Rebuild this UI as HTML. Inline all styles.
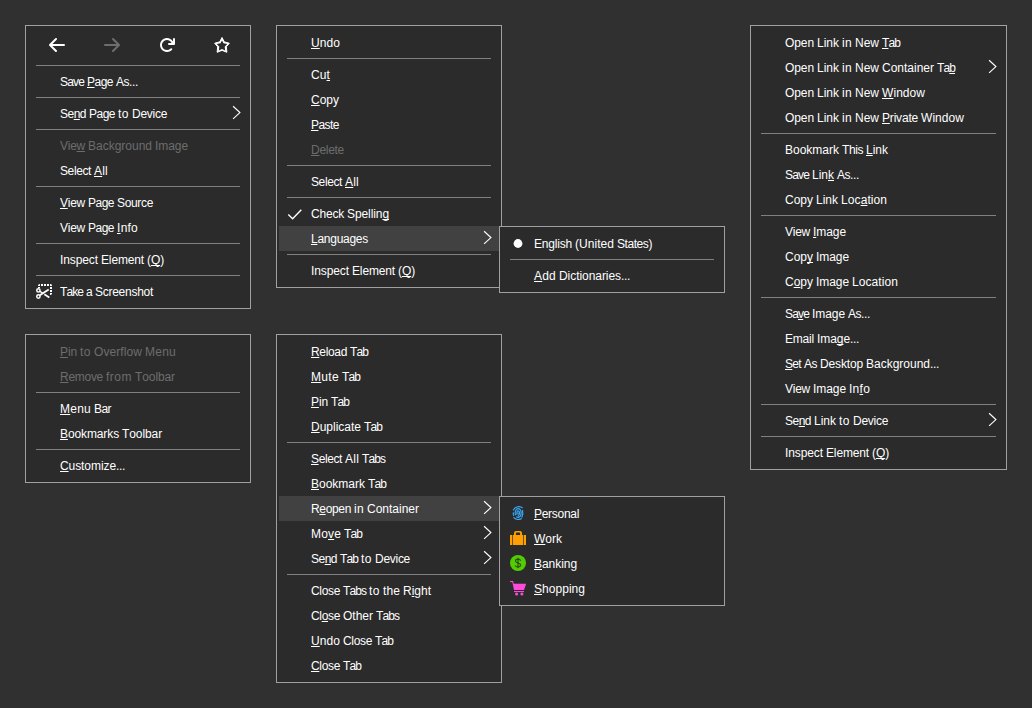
<!DOCTYPE html>
<html><head><meta charset="utf-8"><title>Context menus</title>
<style>
html,body{margin:0;padding:0}
body{width:1032px;height:708px;overflow:hidden;background:#303030;position:relative;font-family:"Liberation Sans",sans-serif;font-size:12px;color:#fff}
.menu{position:absolute;box-sizing:border-box;border:1px solid #a0a0a0;background:#2b2b2b;padding:4px 2px}
.it{font-kerning:none;position:relative;height:25px;line-height:25px;padding-left:32px;white-space:nowrap}
.it .t{position:relative;top:1px;display:inline-block}
.it.dis{color:#6d6d6d}
.it.hl{background:#414141}
.sep{height:1px;margin:3px 8px;background:#808080}
u{text-decoration:underline;text-decoration-skip-ink:none;text-underline-offset:1px;text-decoration-thickness:1px}
.dots{letter-spacing:-0.73px}
.row{height:32px;position:relative}
svg{position:absolute;display:block}
</style></head><body>
<div class="menu" style="left:25px;top:25px;width:226px">
<div class="row"><svg style="left:21px;top:7px" width="16" height="16" viewBox="0 0 16 16"><path fill="#fff" d="M15 7H3.414l4.293-4.293a1 1 0 0 0-1.414-1.414l-6 6a1 1 0 0 0 0 1.414l6 6a1 1 0 0 0 1.414-1.414L3.414 9H15a1 1 0 0 0 0-2z"/></svg><svg style="left:76px;top:7px" width="16" height="16" viewBox="0 0 16 16"><path fill="#6e6e6e" d="M15.707 7.293l-6-6a1 1 0 0 0-1.414 1.414L12.586 7H1a1 1 0 0 0 0 2h11.586l-4.293 4.293a1 1 0 1 0 1.414 1.414l6-6a1 1 0 0 0 0-1.414z"/></svg><svg style="left:131px;top:7px" width="16" height="16" viewBox="0 0 16 16"><path fill="#fff" d="M15 1a1 1 0 0 0-1 1v2.418A6.995 6.995 0 1 0 8 15a6.954 6.954 0 0 0 4.950-2.050 1 1 0 0 0-1.414-1.414A5.019 5.019 0 1 1 12.549 6H10a1 1 0 0 0 0 2h5a1 1 0 0 0 1-1V2a1 1 0 0 0-1-1z"/></svg><svg style="left:186px;top:7px" width="16" height="16" viewBox="0 0 16 16"><path fill="#fff" stroke="#fff" stroke-width="1" stroke-linejoin="round" d="M8 .5L10.250 4.850L15.350 6.250L12.350 9.800L12.850 15.300L8 13.350L3.150 15.300L3.650 9.800L.650 6.250L5.750 4.850z"/><path fill="#2b2b2b" d="M8.00 3.58L9.51 6.36L13.22 7.12L10.67 9.84L11.19 13.44L8.00 12.05L4.81 13.44L5.33 9.84L2.78 7.12L6.49 6.36z"/></svg></div>
<div class="sep"></div>
<div class="it"><span class="t"><span style="letter-spacing:-0.838px;margin-right:3px">Save</span><span style="letter-spacing:-0.506px;margin-right:3px"><u>P</u>age</span><span style="letter-spacing:-0.502px">As<span style="letter-spacing:-0.334px">...</span></span></span></div>
<div class="sep"></div>
<div class="it"><svg style="right:6px;top:4px" width="10" height="16" viewBox="0 0 10 16"><path fill="none" stroke="#fff" stroke-width="1.150" d="M1.100 1.250L7.900 7.550L1.100 13.850"/></svg><span class="t"><span style="letter-spacing:-0.506px;margin-right:3px">Se<u>n</u>d</span><span style="letter-spacing:-0.506px;margin-right:3px">Page</span><span style="letter-spacing:0.496px;margin-right:3px">to</span><span style="letter-spacing:-0.280px">Device</span></span></div>
<div class="sep"></div>
<div class="it dis"><span class="t"><span style="letter-spacing:-0.252px;margin-right:3px">Vie<u>w</u></span><span style="letter-spacing:-0.004px;margin-right:3px">Background</span><span style="letter-spacing:-0.070px">Image</span></span></div>
<div class="it"><span class="t"><span style="letter-spacing:-0.392px;margin-right:3px">Select</span><span style="letter-spacing:0.221px"><u>A</u>ll</span></span></div>
<div class="sep"></div>
<div class="it"><span class="t"><span style="letter-spacing:-0.252px;margin-right:3px"><u>V</u>iew</span><span style="letter-spacing:-0.506px;margin-right:3px">Page</span><span style="letter-spacing:-0.337px">Source</span></span></div>
<div class="it"><span class="t"><span style="letter-spacing:-0.252px;margin-right:3px">View</span><span style="letter-spacing:-0.506px;margin-right:3px">Page</span><span style="letter-spacing:0.246px"><u>I</u>nfo</span></span></div>
<div class="sep"></div>
<div class="it"><span class="t"><span style="letter-spacing:-0.098px;margin-right:3px">Inspect</span><span style="letter-spacing:-0.146px;margin-right:3px">Element</span><span style="letter-spacing:-0.109px">(<u>Q</u>)</span></span></div>
<div class="sep"></div>
<div class="it"><svg style="left:8px;top:4px" width="16" height="16" viewBox="0 0 16 16"><g fill="#fff"><path d="M1.900 3A2.100 2.100 0 0 1 4 .900V3z"/><rect x="5" y="1" width="2" height="2"/><rect x="8" y="1" width="2" height="2"/><rect x="11" y="1" width="2" height="2"/><path d="M14 .900A2.100 2.100 0 0 1 16.100 3H14z"/><rect x="14" y="4" width="2" height="2"/><rect x="14" y="7" width="2" height="2"/><path d="M16.100 10A2.100 2.100 0 0 1 14 12.100V10z"/><rect x="2" y="4" width="2" height="1"/></g><g fill="none" stroke="#fff"><circle cx="2.400" cy="7.400" r="1.650" stroke-width="1.500"/><circle cx="2.400" cy="13.500" r="1.650" stroke-width="1.500"/><path stroke-width="1.900" d="M3.800 12.200L12.700 6.500"/><path stroke-width="1.700" d="M8.300 11.300L13.300 14.500"/><path stroke-width="1.300" d="M3.900 8.400L7.200 10.500"/></g></svg><span class="t"><span style="letter-spacing:-0.919px;margin-right:3px">Take</span><span style="letter-spacing:-0.674px;margin-right:3px">a</span><span style="letter-spacing:-0.270px">Screenshot</span></span></div>
</div>
<div class="menu" style="left:276px;top:25px;width:226px">
<div class="it"><span class="t"><span style="letter-spacing:0.078px"><u>U</u>ndo</span></span></div>
<div class="sep"></div>
<div class="it"><span class="t"><span style="letter-spacing:0.109px">Cu<u>t</u></span></span></div>
<div class="it"><span class="t"><span style="letter-spacing:-0.003px"><u>C</u>opy</span></span></div>
<div class="it"><span class="t"><span style="letter-spacing:-0.537px"><u>P</u>aste</span></span></div>
<div class="it dis"><span class="t"><span style="letter-spacing:-0.281px"><u>D</u>elete</span></span></div>
<div class="sep"></div>
<div class="it"><span class="t"><span style="letter-spacing:-0.392px;margin-right:3px">Select</span><span style="letter-spacing:0.221px"><u>A</u>ll</span></span></div>
<div class="sep"></div>
<div class="it"><svg style="left:8px;top:6px" width="16" height="14" viewBox="0 0 16 14"><path fill="none" stroke="#fff" stroke-width="1.400" d="M1.300 7.600L5.600 11.650L14.300 2.700"/></svg><span class="t"><span style="letter-spacing:-0.203px;margin-right:3px">Check</span><span style="letter-spacing:-0.087px">Spellin<u>g</u></span></span></div>
<div class="it hl"><svg style="right:6px;top:4px" width="10" height="16" viewBox="0 0 10 16"><path fill="none" stroke="#fff" stroke-width="1.150" d="M1.100 1.250L7.900 7.550L1.100 13.850"/></svg><span class="t"><span style="letter-spacing:-0.266px"><u>L</u>anguages</span></span></div>
<div class="sep"></div>
<div class="it"><span class="t"><span style="letter-spacing:-0.098px;margin-right:3px">Inspect</span><span style="letter-spacing:-0.146px;margin-right:3px">Element</span><span style="letter-spacing:-0.109px">(<u>Q</u>)</span></span></div>
</div>
<div class="menu" style="left:499px;top:226px;width:226px">
<div class="it"><svg style="left:11px;top:8px" width="10" height="10" viewBox="0 0 10 10"><circle cx="5" cy="4.500" r="4.400" fill="#fff"/></svg><span class="t"><span style="letter-spacing:-0.194px;margin-right:3px">English</span><span style="letter-spacing:0.045px;margin-right:3px">(United</span><span style="letter-spacing:-0.431px">States)</span></span></div>
<div class="sep"></div>
<div class="it"><span class="t"><span style="letter-spacing:0.216px;margin-right:3px"><u>A</u>dd</span><span style="letter-spacing:-0.057px">Dictionaries<span style="letter-spacing:-0.334px">...</span></span></span></div>
</div>
<div class="menu" style="left:750px;top:25px;width:257px">
<div class="it"><span class="t"><span style="letter-spacing:-0.089px;margin-right:3px">Open</span><span style="letter-spacing:-0.003px;margin-right:3px">Link</span><span style="letter-spacing:0.330px;margin-right:3px">in</span><span style="letter-spacing:-0.002px;margin-right:3px">New</span><span style="letter-spacing:-0.893px"><u>T</u>ab</span></span></div>
<div class="it"><svg style="right:6px;top:4px" width="10" height="16" viewBox="0 0 10 16"><path fill="none" stroke="#fff" stroke-width="1.150" d="M1.100 1.250L7.900 7.550L1.100 13.850"/></svg><span class="t"><span style="letter-spacing:-0.089px;margin-right:3px">Open</span><span style="letter-spacing:-0.003px;margin-right:3px">Link</span><span style="letter-spacing:0.330px;margin-right:3px">in</span><span style="letter-spacing:-0.002px;margin-right:3px">New</span><span style="letter-spacing:-0.003px;margin-right:3px">Container</span><span style="letter-spacing:-0.893px">Ta<u>b</u></span></span></div>
<div class="it"><span class="t"><span style="letter-spacing:-0.089px;margin-right:3px">Open</span><span style="letter-spacing:-0.003px;margin-right:3px">Link</span><span style="letter-spacing:0.330px;margin-right:3px">in</span><span style="letter-spacing:-0.002px;margin-right:3px">New</span><span style="letter-spacing:0.053px"><u>W</u>indow</span></span></div>
<div class="it"><span class="t"><span style="letter-spacing:-0.089px;margin-right:3px">Open</span><span style="letter-spacing:-0.003px;margin-right:3px">Link</span><span style="letter-spacing:0.330px;margin-right:3px">in</span><span style="letter-spacing:-0.002px;margin-right:3px">New</span><span style="letter-spacing:-0.193px;margin-right:3px"><u>P</u>rivate</span><span style="letter-spacing:0.053px">Window</span></span></div>
<div class="sep"></div>
<div class="it"><span class="t"><span style="letter-spacing:-0.002px;margin-right:3px">Bookmark</span><span style="letter-spacing:-0.417px;margin-right:3px">This</span><span style="letter-spacing:-0.003px"><u>L</u>ink</span></span></div>
<div class="it"><span class="t"><span style="letter-spacing:-0.838px;margin-right:3px">Save</span><span style="letter-spacing:-0.003px;margin-right:3px">Lin<u>k</u></span><span style="letter-spacing:-0.502px">As<span style="letter-spacing:-0.334px">...</span></span></span></div>
<div class="it"><span class="t"><span style="letter-spacing:-0.003px;margin-right:3px">Copy</span><span style="letter-spacing:-0.003px;margin-right:3px">Link</span><span style="letter-spacing:0.079px">Loc<u>a</u>tion</span></span></div>
<div class="sep"></div>
<div class="it"><span class="t"><span style="letter-spacing:-0.252px;margin-right:3px">View</span><span style="letter-spacing:-0.070px"><u>I</u>mage</span></span></div>
<div class="it"><span class="t"><span style="letter-spacing:-0.003px;margin-right:3px">Cop<u>y</u></span><span style="letter-spacing:-0.070px">Image</span></span></div>
<div class="it"><span class="t"><span style="letter-spacing:-0.003px;margin-right:3px">C<u>o</u>py</span><span style="letter-spacing:-0.070px;margin-right:3px">Image</span><span style="letter-spacing:0.079px">Location</span></span></div>
<div class="sep"></div>
<div class="it"><span class="t"><span style="letter-spacing:-0.838px;margin-right:3px">Sa<u>v</u>e</span><span style="letter-spacing:-0.070px;margin-right:3px">Image</span><span style="letter-spacing:-0.502px">As<span style="letter-spacing:-0.334px">...</span></span></span></div>
<div class="it"><span class="t"><span style="letter-spacing:-0.201px;margin-right:3px">Email</span><span style="letter-spacing:-0.070px">Ima<u>g</u>e<span style="letter-spacing:-0.334px">...</span></span></span></div>
<div class="it"><span class="t"><span style="letter-spacing:-0.671px;margin-right:3px"><u>S</u>et</span><span style="letter-spacing:-0.502px;margin-right:3px">As</span><span style="letter-spacing:-0.146px;margin-right:3px">Desktop</span><span style="letter-spacing:-0.004px">Background<span style="letter-spacing:-0.334px">...</span></span></span></div>
<div class="it"><span class="t"><span style="letter-spacing:-0.252px;margin-right:3px">View</span><span style="letter-spacing:-0.070px;margin-right:3px">Image</span><span style="letter-spacing:0.246px">In<u>f</u>o</span></span></div>
<div class="sep"></div>
<div class="it"><svg style="right:6px;top:4px" width="10" height="16" viewBox="0 0 10 16"><path fill="none" stroke="#fff" stroke-width="1.150" d="M1.100 1.250L7.900 7.550L1.100 13.850"/></svg><span class="t"><span style="letter-spacing:-0.506px;margin-right:3px">Se<u>n</u>d</span><span style="letter-spacing:-0.003px;margin-right:3px">Link</span><span style="letter-spacing:0.496px;margin-right:3px">to</span><span style="letter-spacing:-0.280px">Device</span></span></div>
<div class="sep"></div>
<div class="it"><span class="t"><span style="letter-spacing:-0.098px;margin-right:3px">Inspect</span><span style="letter-spacing:-0.146px;margin-right:3px">Element</span><span style="letter-spacing:-0.109px">(<u>Q</u>)</span></span></div>
</div>
<div class="menu" style="left:25px;top:334px;width:226px">
<div class="it dis"><span class="t"><span style="letter-spacing:-0.115px;margin-right:3px"><u>P</u>in</span><span style="letter-spacing:0.496px;margin-right:3px">to</span><span style="letter-spacing:0.082px;margin-right:3px">Overflow</span><span style="letter-spacing:0.246px">Menu</span></span></div>
<div class="it dis"><span class="t"><span style="letter-spacing:-0.281px;margin-right:3px"><u>R</u>emove</span><span style="letter-spacing:0.500px;margin-right:3px">from</span><span style="letter-spacing:-0.098px">Toolbar</span></span></div>
<div class="sep"></div>
<div class="it"><span class="t"><span style="letter-spacing:0.246px;margin-right:3px"><u>M</u>enu</span><span style="letter-spacing:-0.558px">Bar</span></span></div>
<div class="it"><span class="t"><span style="letter-spacing:-0.113px;margin-right:3px"><u>B</u>ookmarks</span><span style="letter-spacing:-0.098px">Toolbar</span></span></div>
<div class="sep"></div>
<div class="it"><span class="t"><span style="letter-spacing:-0.076px"><u>C</u>ustomize<span style="letter-spacing:-0.334px">...</span></span></span></div>
</div>
<div class="menu" style="left:276px;top:334px;width:226px">
<div class="it"><span class="t"><span style="letter-spacing:-0.338px;margin-right:3px"><u>R</u>eload</span><span style="letter-spacing:-0.893px">Tab</span></span></div>
<div class="it"><span class="t"><span style="letter-spacing:0.331px;margin-right:3px"><u>M</u>ute</span><span style="letter-spacing:-0.893px">Tab</span></span></div>
<div class="it"><span class="t"><span style="letter-spacing:-0.115px;margin-right:3px"><u>P</u>in</span><span style="letter-spacing:-0.893px">Tab</span></span></div>
<div class="it"><span class="t"><span style="letter-spacing:-0.003px;margin-right:3px"><u>D</u>uplicate</span><span style="letter-spacing:-0.893px">Tab</span></span></div>
<div class="sep"></div>
<div class="it"><span class="t"><span style="letter-spacing:-0.392px;margin-right:3px"><u>S</u>elect</span><span style="letter-spacing:0.221px;margin-right:3px">All</span><span style="letter-spacing:-0.919px">Tabs</span></span></div>
<div class="it"><span class="t"><span style="letter-spacing:-0.002px;margin-right:3px"><u>B</u>ookmark</span><span style="letter-spacing:-0.893px">Tab</span></span></div>
<div class="it hl"><svg style="right:6px;top:4px" width="10" height="16" viewBox="0 0 10 16"><path fill="none" stroke="#fff" stroke-width="1.150" d="M1.100 1.250L7.900 7.550L1.100 13.850"/></svg><span class="t"><span style="letter-spacing:-0.339px;margin-right:3px">R<u>e</u>open</span><span style="letter-spacing:0.330px;margin-right:3px">in</span><span style="letter-spacing:-0.003px">Container</span></span></div>
<div class="it"><svg style="right:6px;top:4px" width="10" height="16" viewBox="0 0 10 16"><path fill="none" stroke="#fff" stroke-width="1.150" d="M1.100 1.250L7.900 7.550L1.100 13.850"/></svg><span class="t"><span style="letter-spacing:0.164px;margin-right:3px">Mo<u>v</u>e</span><span style="letter-spacing:-0.893px">Tab</span></span></div>
<div class="it"><svg style="right:6px;top:4px" width="10" height="16" viewBox="0 0 10 16"><path fill="none" stroke="#fff" stroke-width="1.150" d="M1.100 1.250L7.900 7.550L1.100 13.850"/></svg><span class="t"><span style="letter-spacing:-0.506px;margin-right:3px">Se<u>n</u>d</span><span style="letter-spacing:-0.893px;margin-right:3px">Tab</span><span style="letter-spacing:0.496px;margin-right:3px">to</span><span style="letter-spacing:-0.280px">Device</span></span></div>
<div class="sep"></div>
<div class="it"><span class="t"><span style="letter-spacing:-0.336px;margin-right:3px">Close</span><span style="letter-spacing:-0.919px;margin-right:3px">Tabs</span><span style="letter-spacing:0.496px;margin-right:3px">to</span><span style="letter-spacing:0.106px;margin-right:3px">the</span><span style="letter-spacing:-0.003px">R<u>i</u>ght</span></span></div>
<div class="it"><span class="t"><span style="letter-spacing:-0.336px;margin-right:3px">Cl<u>o</u>se</span><span style="letter-spacing:-0.002px;margin-right:3px">Other</span><span style="letter-spacing:-0.919px">Tabs</span></span></div>
<div class="it"><span class="t"><span style="letter-spacing:0.078px;margin-right:3px"><u>U</u>ndo</span><span style="letter-spacing:-0.336px;margin-right:3px">Close</span><span style="letter-spacing:-0.893px">Tab</span></span></div>
<div class="it"><span class="t"><span style="letter-spacing:-0.336px;margin-right:3px"><u>C</u>lose</span><span style="letter-spacing:-0.893px">Tab</span></span></div>
</div>
<div class="menu" style="left:499px;top:496px;width:226px">
<div class="it"><svg style="left:8px;top:4px" width="16" height="16" viewBox="0 0 16 16"><g fill="none" stroke="#37adff" stroke-width="1.150"><path d="M3.300 5.500C4.600 1.400 10.200 .500 12.600 3.200"/><path d="M12.500 5C13.100 7.500 12.900 10.500 11.700 12.600"/><path d="M3.300 7.400C3.200 8.700 3.300 9.800 3.700 10.900"/><path d="M3.500 12.300C5.600 14.900 9.600 15 11.700 13.600"/><path d="M5.500 10.300C4.500 7.500 5.600 3.600 8.100 3.600C10.800 3.600 11.600 7 10.900 9.800C10.200 12.300 7.900 12.900 6.300 11.700"/><path d="M7.100 9.700C6.400 8 7 5.800 8.100 5.800C9.400 5.800 9.800 7.800 9.300 9.300C8.900 10.300 8.300 10.700 7.800 10.600"/><path d="M8.100 7.400V8.900"/></g></svg><span class="t"><span style="letter-spacing:-0.295px"><u>P</u>ersonal</span></span></div>
<div class="it"><svg style="left:8px;top:4px" width="16" height="16" viewBox="0 0 16 16"><g fill="#ff9f00"><rect x="0" y="5" width="2.250" height="10"/><rect x="2.900" y="5" width="10.200" height="10"/><rect x="13.750" y="5" width="2.250" height="10"/><path fill-rule="evenodd" d="M4 5V3a2 2 0 0 1 2-2h4a2 2 0 0 1 2 2v2zM5.900 5h4.200V3a.600.600 0 0 0-.600-.600h-3a.600.600 0 0 0-.600.600z"/></g></svg><span class="t"><span style="letter-spacing:0.001px"><u>W</u>ork</span></span></div>
<div class="it"><svg style="left:8px;top:4px" width="16" height="16" viewBox="0 0 16 16"><circle cx="8" cy="8" r="8" fill="#51cd00"/><g fill="none" stroke="#2b2b2b" stroke-opacity=".800" stroke-width="1.150"><path d="M10.700 5.700C10.300 4.600 9.300 4.100 8 4.100C6.500 4.100 5.500 4.900 5.500 6C5.500 7.200 6.600 7.650 8 7.950C9.500 8.300 10.600 8.800 10.600 10.100C10.600 11.300 9.500 12 8 12C6.500 12 5.500 11.400 5.200 10.300"/><path d="M8 2.800v10.500"/></g></svg><span class="t"><span style="letter-spacing:-0.052px"><u>B</u>anking</span></span></div>
<div class="it"><svg style="left:8px;top:4px" width="16" height="16" viewBox="0 0 16 16"><g fill="#ff4bda"><path d="M0 1h3.100l.600 2.700H16.200L14 10H4L2.300 2H0z"/><rect x="4" y="11" width="10" height="1.100"/><circle cx="6.600" cy="14" r="1.500"/><circle cx="11.900" cy="14" r="1.500"/></g></svg><span class="t"><span style="letter-spacing:0.036px"><u>S</u>hopping</span></span></div>
</div>
</body></html>
